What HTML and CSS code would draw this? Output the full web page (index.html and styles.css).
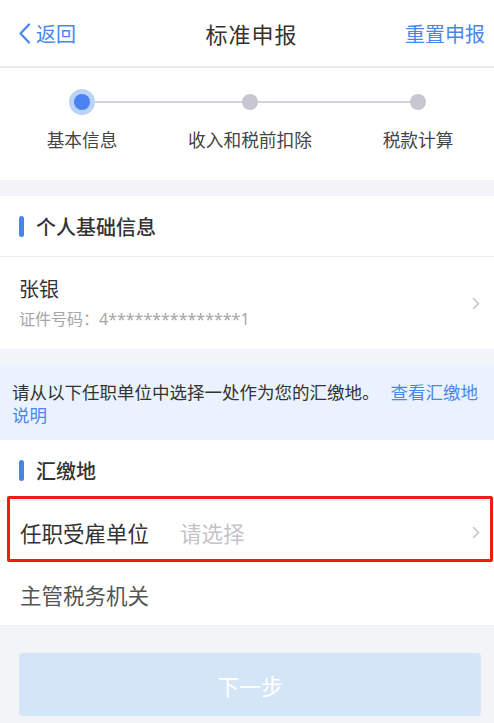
FILE: index.html
```html
<!DOCTYPE html>
<html lang="zh-CN">
<head>
<meta charset="utf-8">
<title>标准申报</title>
<link rel="stylesheet" href="styles.css">
</head>
<body>
<div class="page">
  <header class="nav">
    <div class="nav-back">
      <svg class="back-icon" width="13" height="21" viewBox="0 0 13 21"><path d="M11 1.5 L2.5 10.5 L11 19.5" fill="none" stroke="#4a86ee" stroke-width="2.2" stroke-linecap="round" stroke-linejoin="round"/></svg>
      <span>返回</span>
    </div>
    <div class="nav-title">标准申报</div>
    <div class="nav-action">重置申报</div>
  </header>

  <section class="steps">
    <div class="step-track">
      <div class="step-line"></div>
      <div class="step step-active"><span class="dot"></span><span class="label">基本信息</span></div>
      <div class="step"><span class="dot"></span><span class="label">收入和税前扣除</span></div>
      <div class="step"><span class="dot"></span><span class="label">税款计算</span></div>
    </div>
  </section>

  <section class="card">
    <div class="card-head"><span class="bar"></span>个人基础信息</div>
    <div class="person-row">
      <div class="person-info">
        <div class="person-name">张银</div>
        <div class="person-id">证件号码：4***************1</div>
      </div>
      <svg class="chev" width="8" height="13" viewBox="0 0 8 13"><path d="M1.5 1.5 L6.5 6.5 L1.5 11.5" fill="none" stroke="#c4c4c8" stroke-width="1.6" stroke-linecap="round" stroke-linejoin="round"/></svg>
    </div>
  </section>

  <div class="notice"><span class="notice-text">请从以下任职单位中选择一处作为您的汇缴地。</span><span class="link link-first">查看汇缴地</span><span class="link">说明</span></div>

  <section class="card card-flush">
    <div class="card-head"><span class="bar"></span>汇缴地</div>
    <div class="field-row">
      <span class="field-label">任职受雇单位</span>
      <span class="field-value">请选择</span>
      <svg class="chev" width="8" height="13" viewBox="0 0 8 13"><path d="M1.5 1.5 L6.5 6.5 L1.5 11.5" fill="none" stroke="#c4c4c8" stroke-width="1.6" stroke-linecap="round" stroke-linejoin="round"/></svg>
      <span class="highlight-box"></span>
    </div>
    <div class="field-row">
      <span class="field-label field-label-muted">主管税务机关</span>
    </div>
  </section>

  <div class="footer">
    <button class="next-btn">下一步</button>
  </div>
</div>
</body>
</html>
```
FILE: styles.css
```css
* { box-sizing: border-box; }
html, body { margin: 0; padding: 0; }
body {
  width: 494px;
  height: 723px;
  overflow: hidden;
  background: #f2f4f8;
  font-family: "Noto Sans CJK SC", "Noto Sans", sans-serif;
  color: #333;
}
.page { display: flex; flex-direction: column; min-height: 723px; }

.nav {
  height: 68px;
  background: #fff;
  border-bottom: 2px solid #ebebeb;
  display: flex;
  align-items: center;
  justify-content: space-between;
  padding: 0 9px 0 18px;
}
.nav-back { display: flex; align-items: center; color: #4a86ee; font-size: 20px; gap: 5px; width: 120px; }
.back-icon { display: block; }
.nav-title { font-size: 22px; color: #333; letter-spacing: 1px; }
.nav-action { color: #4a86ee; font-size: 20px; width: 120px; text-align: right; }

.steps { background: #fff; height: 112px; padding-top: 21px; }
.step-track { position: relative; display: flex; padding-left: 82px; gap: 168px; }
.step-line { position: absolute; left: 82px; width: 336px; top: 12px; height: 2px; background: #d3d3da; }
.step { width: 0; display: flex; flex-direction: column; align-items: center; position: relative; }
.dot { flex: none; width: 16px; height: 16px; border-radius: 50%; background: #c7c7cf; margin: 5px 0; }
.step-active .dot { background: #4a82ef; box-shadow: 0 0 0 5px #bcd3f8; }
.label { margin-top: 14px; font-size: 17.7px; color: #444; line-height: 20px; white-space: nowrap; }

.card { background: #fff; margin-top: 16px; }
.card-flush { margin-top: 0; }
.card-head {
  height: 61px;
  display: flex;
  align-items: center;
  padding-left: 19px;
  font-size: 20px;
  font-weight: 500;
  color: #333;
  border-bottom: 1px solid #ededed;
}
.bar { width: 5px; height: 21px; background: #4a82ef; border-radius: 3px; margin-right: 12px; }

.person-row { height: 92px; display: flex; align-items: center; justify-content: space-between; padding: 0 14px 0 19px; }
.person-name { font-size: 20px; color: #333; line-height: 26px; }
.person-id { font-family: "Noto Sans", "Noto Sans CJK SC", sans-serif; font-size: 16px; color: #a6a6a6; margin-top: 6px; line-height: 22px; }
.chev { display: block; }

.notice {
  margin-top: 16px;
  background: #eaf2fd;
  padding: 15px 12px 14px 12px;
  font-size: 17.5px;
  line-height: 23px;
  color: #333;
}
.link { color: #4a86ee; }
.link-first { margin-left: 11px; }

.field-row {
  height: 62px;
  display: flex;
  align-items: center;
  padding: 0 14px 0 20px;
  position: relative;
}
.field-label { font-size: 21.5px; color: #333; width: 160px; }
.field-label-muted { color: #555; }
.field-value { font-size: 21.5px; color: #c3c3c8; flex: 1; }
.highlight-box {
  position: absolute;
  left: 7px;
  right: 1px;
  top: -5px;
  bottom: 1px;
  border: 3px solid #f21a12;
  border-radius: 2px;
  pointer-events: none;
}

.footer { padding: 28px 13px 0 19px; }
.next-btn {
  width: 462px;
  height: 63px;
  border: none;
  border-radius: 4px;
  background: #d5e5f8;
  color: #fff;
  font-family: inherit;
  font-size: 22px;
}
```
